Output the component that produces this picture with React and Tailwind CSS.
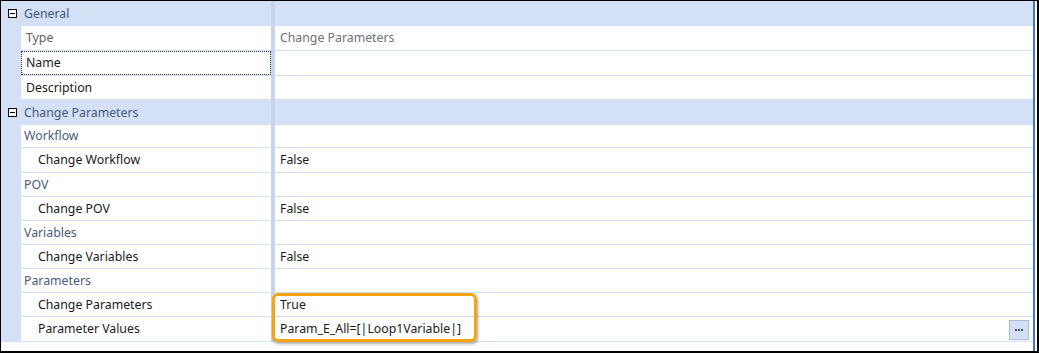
import React from "react";

const rows = [
    { kind: "header", label: "General", h: "h-[25px]" },
    { kind: "prop", label: "Type", value: "Change Parameters", readOnly: true, h: "h-[25px]" },
    { kind: "prop", label: "Name", value: "", focused: true, h: "h-[25px]" },
    { kind: "prop", label: "Description", value: "", h: "h-[24px]" },
    { kind: "header", label: "Change Parameters", h: "h-[25px]" },
    { kind: "category", label: "Workflow", h: "h-[23px]" },
    { kind: "sub", label: "Change Workflow", value: "False", h: "h-[25px]" },
    { kind: "category", label: "POV", h: "h-[24px]" },
    { kind: "sub", label: "Change POV", value: "False", h: "h-[24px]" },
    { kind: "category", label: "Variables", h: "h-[24px]" },
    { kind: "sub", label: "Change Variables", value: "False", h: "h-[24px]" },
    { kind: "category", label: "Parameters", h: "h-[24px]" },
    { kind: "sub", label: "Change Parameters", value: "True", h: "h-[24px]" },
    { kind: "sub", label: "Parameter Values", value: "Param_E_All=[|Loop1Variable|]", button: true, h: "h-[25px]" },
];

const CollapseBox = () => (
    <span className="w-[9px] h-[9px] border border-black bg-white flex items-center justify-center">
        <span className="w-[5px] h-px bg-black" />
    </span>
);

const Row = ({ row }) => {
    if (row.kind === "header") {
        return (
            <div className={`flex ${row.h} bg-[#d4e0f6]`}>
                <div className="w-[20px] flex items-center justify-center pl-[3px]">
                    <CollapseBox />
                </div>
                <div className="w-[250px] flex items-center pl-[3px] pt-px text-[#44587a]">{row.label}</div>
                <div className="w-[4px] bg-[#c6d4ee]" />
                <div className="flex-1" />
            </div>
        );
    }

    const labelClass =
        row.kind === "category"
            ? "pl-[3px] text-[#4a5b7b]"
            : row.kind === "sub"
            ? "pl-[17px] text-[#1a1a1a]"
            : row.readOnly
            ? "pl-[5px] text-[#5f5f5f]"
            : "pl-[5px] text-[#1a1a1a]";

    return (
        <div className={`flex ${row.h}`}>
            <div className="w-[20px] bg-[#d4e0f6]" />
            <div className="w-[250px] border-b border-[#d4e0f6] flex">
                {row.focused ? (
                    <div className="flex-1 flex items-center border border-dotted border-[#333] pl-[4px] pt-px text-[#1a1a1a]">
                        {row.label}
                    </div>
                ) : (
                    <div className={`flex-1 flex items-center pt-px ${labelClass}`}>{row.label}</div>
                )}
            </div>
            <div className="w-[4px] bg-[#c6d4ee]" />
            <div className="flex-1 border-b border-[#d4e0f6] flex items-center justify-between pl-[5px] pr-[4px] pt-px">
                <span className={row.readOnly ? "text-[#707070]" : "text-[#1a1a1a]"}>{row.value}</span>
                {row.button && (
                    <button className="w-[20px] h-[20px] bg-[#d4e0f6] border border-[#a8bbde] flex items-center justify-center gap-px">
                        <span className="w-[2px] h-[2px] bg-[#7a3a2a]" />
                        <span className="w-[2px] h-[2px] bg-[#2a5a8a]" />
                        <span className="w-[2px] h-[2px] bg-[#2a5a8a]" />
                    </button>
                )}
            </div>
        </div>
    );
};

const App = () => {
    return (
        <div
            className="relative w-[1039px] h-[353px] bg-white border-l border-t border-r-2 border-b-2 border-black text-[12.3px] leading-none"
            style={{ fontFamily: '"Noto Sans", "Open Sans", sans-serif' }}
        >
            <div className="flex h-full">
                <div className="w-[1032px] flex flex-col">
                    {rows.map((row, i) => (
                        <Row key={i} row={row} />
                    ))}
                </div>
                <div className="w-[2px] bg-[#3d7ac6]" />
            </div>

            {/* resaltado de los parámetros */}
            <div className="absolute left-[271px] top-[292px] w-[205px] h-[49px] border-[3px] border-[#f5a50f] rounded-[6px] shadow-[1px_2px_3px_rgba(0,0,0,0.35)]" />
        </div>
    );
};

export default App;
